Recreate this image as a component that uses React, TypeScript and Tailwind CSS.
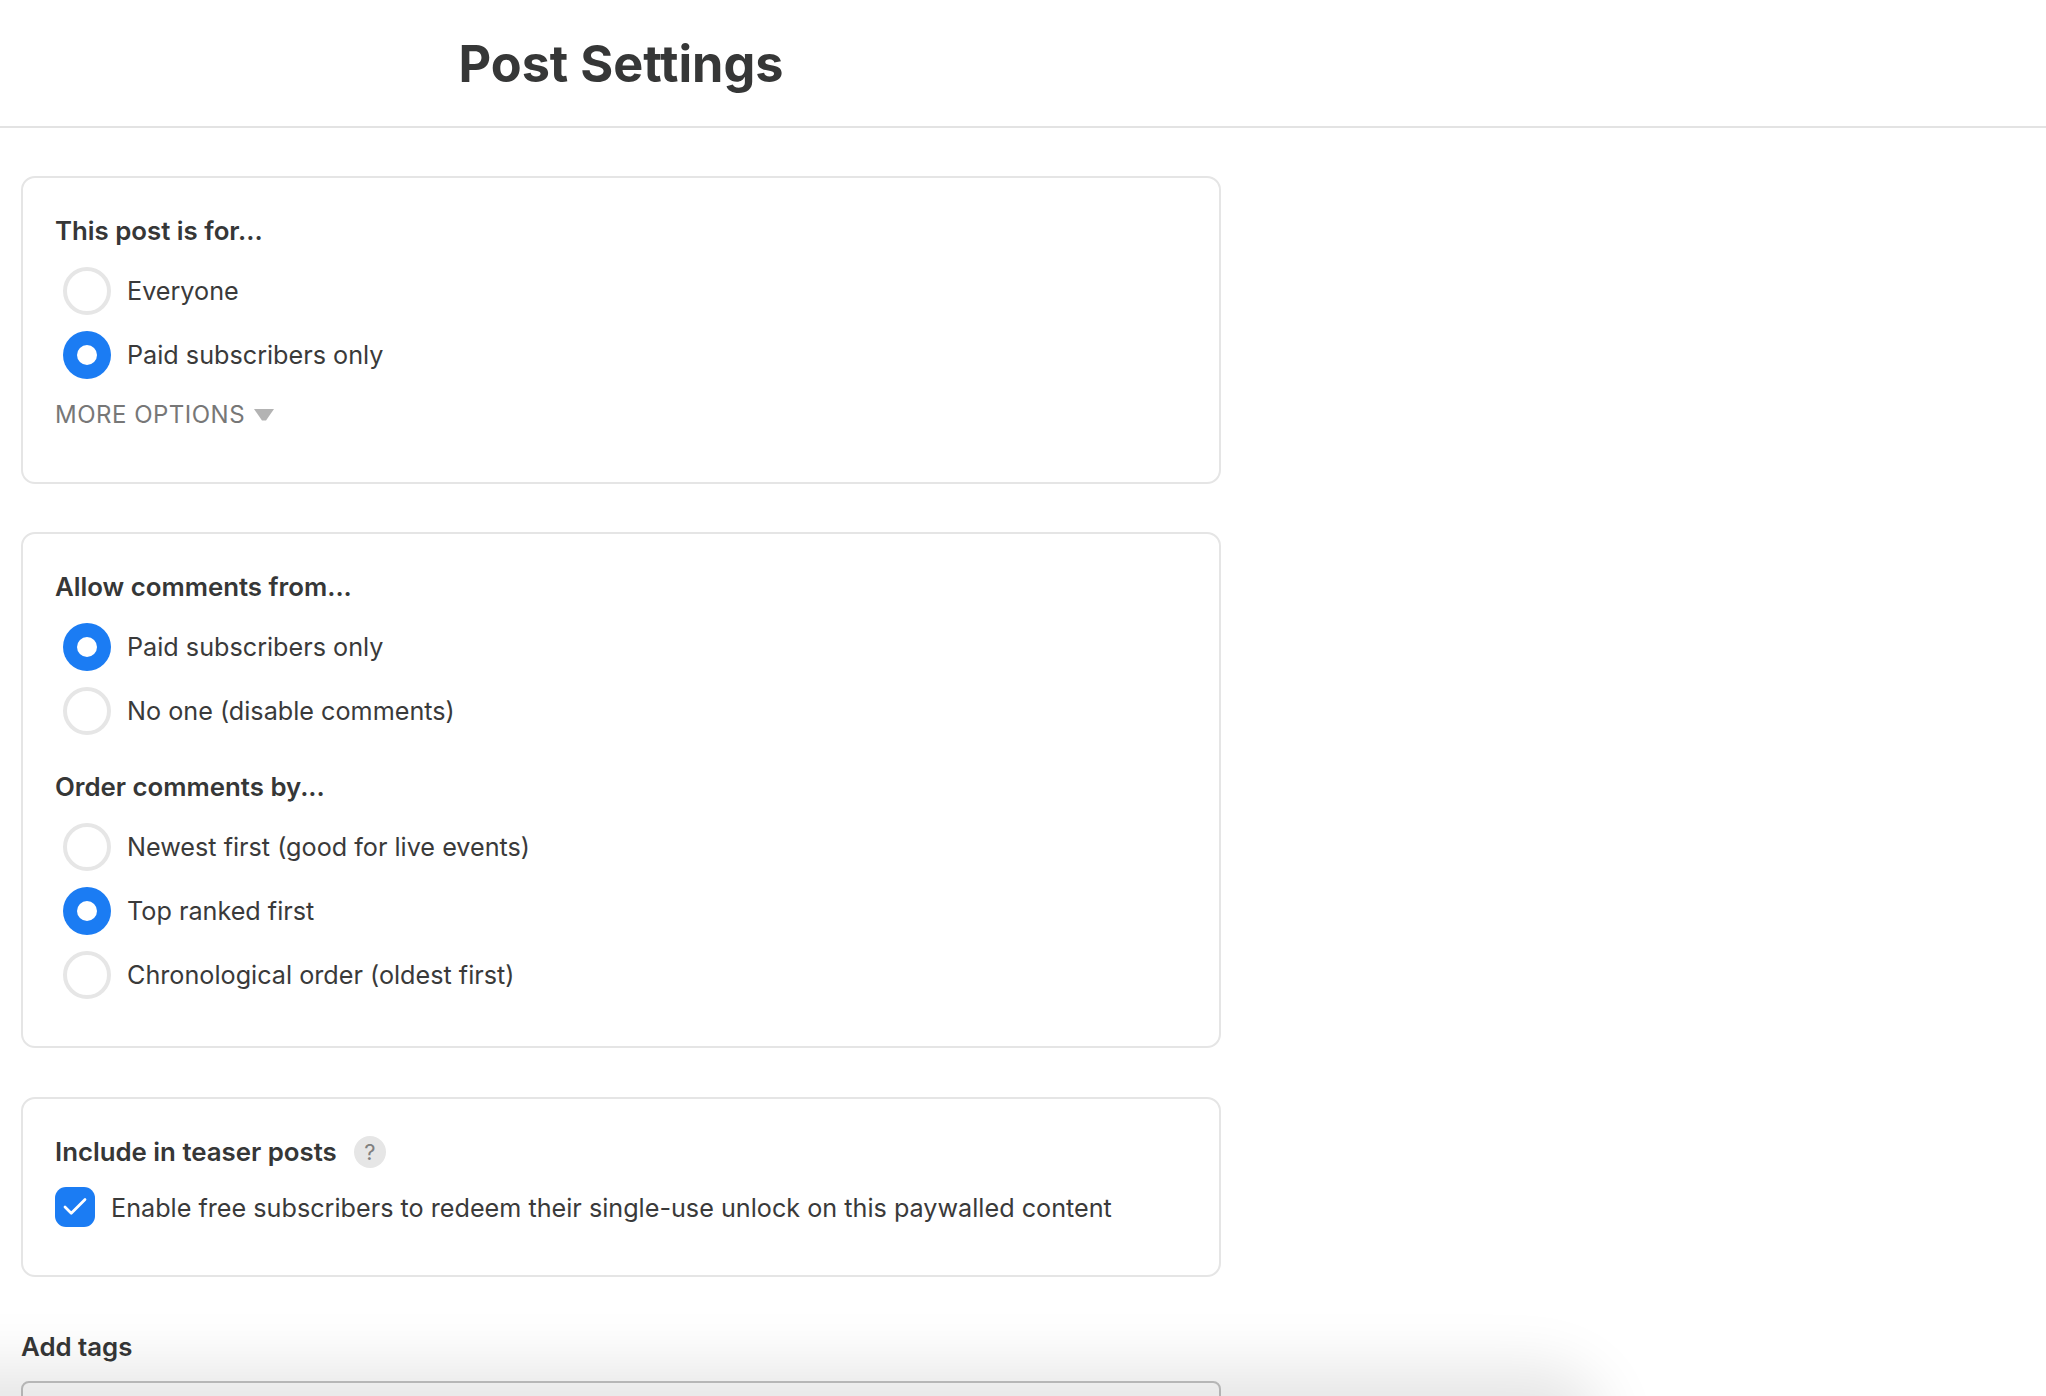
import { Check } from 'lucide-react';

function Radio({ label, checked }: { label: string; checked?: boolean }) {
    return (
        <label className="flex items-center h-16 pl-[8px] gap-4">
            {checked ? (
                <span className="w-12 h-12 rounded-full bg-[#1b7cf3] flex items-center justify-center">
                    <span className="w-5 h-5 rounded-full bg-white" />
                </span>
            ) : (
                <span className="w-12 h-12 rounded-full border-[4px] border-[#e6e6e6] bg-white" />
            )}
            <span className="text-[25.2px] leading-9 text-[#3a3a3a]">{label}</span>
        </label>
    );
}

function Heading({ children }: { children: React.ReactNode }) {
    return <h3 className="text-[25.8px] leading-9 font-semibold text-[#363737]">{children}</h3>;
}

function App() {
    return (
        <div className="relative h-[1396px] overflow-hidden bg-white font-['Inter',sans-serif]">
            <header className="h-[128px] border-b-2 border-[#e3e3e3]">
                <div className="w-[1242px] h-full pt-[2px] flex items-center justify-center">
                    <h1 className="text-[50.4px] font-bold text-[#363737]">Post Settings</h1>
                </div>
            </header>

            <main className="w-[1242px] px-[21px] pt-[48px] flex flex-col">
                <section className="h-[308px] border-2 border-[#e5e5e5] rounded-[14px] px-[32px] pt-[35px]">
                    <Heading>This post is for...</Heading>
                    <div className="pt-[10px]">
                        <Radio label="Everyone" />
                        <Radio label="Paid subscribers only" checked />
                    </div>
                    <button className="mt-[10px] flex items-center gap-2 text-[24px] leading-9 tracking-[0.5px] text-[#777777]">
                        MORE OPTIONS
                        <svg width="22" height="12" viewBox="0 0 22 12">
                            <path d="M1 0h20l-8 11.5h-4z" fill="#b3b3b3" />
                        </svg>
                    </button>
                </section>

                <section className="mt-[48px] h-[516px] border-2 border-[#e5e5e5] rounded-[14px] px-[32px] pt-[35px]">
                    <Heading>Allow comments from...</Heading>
                    <div className="pt-[10px]">
                        <Radio label="Paid subscribers only" checked />
                        <Radio label="No one (disable comments)" />
                    </div>
                    <div className="mt-[26px]">
                        <Heading>Order comments by...</Heading>
                    </div>
                    <div className="pt-[10px]">
                        <Radio label="Newest first (good for live events)" />
                        <Radio label="Top ranked first" checked />
                        <Radio label="Chronological order (oldest first)" />
                    </div>
                </section>

                <section className="mt-[49px] h-[180px] border-2 border-[#e5e5e5] rounded-[14px] px-[32px] pt-[35px]">
                    <div className="flex items-center gap-[17px]">
                        <Heading>Include in teaser posts</Heading>
                        <span className="w-8 h-8 rounded-full bg-[#e6e6e6] flex items-center justify-center text-[22px] text-[#808080]">?</span>
                    </div>
                    <div className="mt-[17px] flex items-center gap-4">
                        <span className="w-10 h-10 rounded-[11px] bg-[#1b7cf3] flex items-center justify-center">
                            <Check size={30} strokeWidth={2.2} color="#ffffff" />
                        </span>
                        <span className="text-[25.2px] leading-9 text-[#3a3a3a] translate-y-[1px]">
                            Enable free subscribers to redeem their single-use unlock on this paywalled content
                        </span>
                    </div>
                </section>

                <div className="mt-[49px] pt-[3px]">
                    <Heading>Add tags</Heading>
                    <div className="mt-[16px] h-[60px] border-2 border-[#c4c4c4] rounded-[8px] bg-white" />
                </div>
            </main>

            <div className="absolute left-[-100px] bottom-[-80px] w-[1680px] h-[80px] rounded-[60px] shadow-[0_-6px_60px_24px_rgba(0,0,0,0.1)]" />
        </div>
    );
}

export default App;
